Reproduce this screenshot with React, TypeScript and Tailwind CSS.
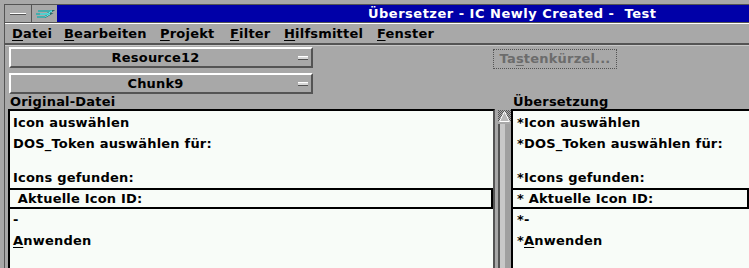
import React from 'react';

const F = "font-['DejaVu_Sans','Liberation_Sans',sans-serif] font-bold tracking-[0.2px]";

const Mn = ({ k, rest }: { k: string; rest: string }) => (
  <>
    <span className="underline decoration-1 underline-offset-[2px]">{k}</span>
    {rest}
  </>
);

const menus = [
  { k: 'D', rest: 'atei', w: 'w-[52px]' },
  { k: 'B', rest: 'earbeiten', w: 'w-[96px]' },
  { k: 'P', rest: 'rojekt', w: 'w-[70px]' },
  { k: 'F', rest: 'ilter', w: 'w-[54px]' },
  { k: 'H', rest: 'ilfsmittel', w: 'w-[93px]' },
  { k: 'F', rest: 'enster', w: 'w-[80px]' },
];

const Dropdown = ({ label }: { label: string }) => (
  <div className="w-[304px] h-[21px] bg-[#a8a8a8] border-t-2 border-l-2 border-t-white border-l-white border-b-2 border-r-2 border-b-[#545454] border-r-[#545454] flex items-center">
    <div className="flex-1 text-center text-[13px] text-black pl-[2px]">{label}</div>
    <div className="w-[10px] h-[4px] bg-[#d8d8d8] border-t border-t-white border-b border-b-[#545454] mr-[3px] mt-[1px]" />
  </div>
);

type Row = { t: React.ReactNode; box?: boolean; h?: string };

const leftRows: Row[] = [
  { t: 'Icon auswählen' },
  { t: 'DOS_Token auswählen für:' },
  { t: '', h: 'h-[13px]' },
  { t: 'Icons gefunden:' },
  { t: '\u00a0Aktuelle Icon ID:', box: true },
  { t: '-' },
  { t: <Mn k="A" rest="nwenden" /> },
];

const rightRows: Row[] = [
  { t: '*Icon auswählen' },
  { t: '*DOS_Token auswählen für:' },
  { t: '', h: 'h-[13px]' },
  { t: '*Icons gefunden:' },
  { t: '*\u00a0Aktuelle Icon ID:', box: true },
  { t: '*-' },
  { t: <>*<Mn k="A" rest="nwenden" /></> },
];

const Rows = ({ rows, pad }: { rows: Row[]; pad: string }) => (
  <>
    {rows.map((r, i) =>
      r.box ? (
        <div key={i} className={`h-[21px] border-2 border-black -ml-[2px] flex items-center ${pad}`}>
          {r.t}
        </div>
      ) : (
        <div key={i} className={`${r.h ?? 'h-[21px]'} flex items-center ${pad}`}>
          {r.t}
        </div>
      )
    )}
  </>
);

const UpArrow = () => (
  <svg width="13" height="14" viewBox="0 0 13 14">
    <defs>
      <pattern id="dith" width="2" height="2" patternUnits="userSpaceOnUse">
        <rect width="2" height="2" fill="#a8a8a8" />
        <rect width="1" height="1" fill="#545454" />
        <rect x="1" y="1" width="1" height="1" fill="#545454" />
      </pattern>
    </defs>
    <rect width="13" height="14" fill="url(#dith)" />
    <path d="M6.5 1.5 L11.5 11.5 L1.5 11.5 Z" fill="#b8b8b8" stroke="#ffffff" strokeWidth="1" />
    <rect x="0" y="12" width="13" height="2" fill="#a8a8a8" />
  </svg>
);

export default function App() {
  return (
    <div className={`w-[749px] h-[268px] overflow-hidden bg-[#a8a8a8] pl-[4px] pt-[4px] ${F}`}>
      <div className="h-full border-l border-t border-[#545454] flex flex-col">
        {/* title bar */}
        <div className="h-[18px] flex border-b border-[#545454] shrink-0">
          <div className="w-[26px] flex items-center justify-center">
            <div className="w-[16px] h-[2px] bg-white border-b border-[#545454]" />
          </div>
          <div className="w-px bg-[#545454]" />
          <div className="w-[25px] flex items-center justify-center">
            <svg width="20" height="10" viewBox="0 0 20 10">
              <path d="M3 2 H17 L12 5 H1 M5 5 H15 L10 8 H2" fill="none" stroke="#2a6a6a" strokeWidth="2" />
              <path d="M3 2 H17 L12 5 H1 M5 5 H15 L10 8 H2" fill="none" stroke="#5ff0f0" strokeWidth="1" />
            </svg>
          </div>
          <div className="flex-1 bg-[#0000a8] text-white text-[13px] tracking-[0.5px] flex items-center pl-[311px] whitespace-pre">
            Übersetzer - IC Newly Created -  Test
          </div>
        </div>
        {/* menu bar */}
        <div className="h-[20px] flex items-center pl-[7px] text-[13px] text-black border-t border-white shrink-0">
          {menus.map((m, i) => (
            <span key={i} className={m.w}>
              <Mn k={m.k} rest={m.rest} />
            </span>
          ))}
        </div>
        <div className="h-[2px] bg-[#545454] shrink-0" />
        <div className="h-px bg-[#c8c8c8] shrink-0" />
        {/* controls */}
        <div className="flex pl-[4px] pt-[1px] shrink-0">
          <div className="flex flex-col gap-[5px]">
            <Dropdown label="Resource12" />
            <Dropdown label="Chunk9" />
          </div>
          <div className="ml-[180px] mt-[2px] w-[124px] h-[20px] border border-dotted border-[#545454] flex items-center justify-center text-[13px] text-[#6c6c6c]">
            Ta<span className="underline decoration-1 underline-offset-[2px]">s</span>tenkürzel...
          </div>
        </div>
        {/* labels */}
        <div className="h-[15px] flex items-end text-[13px] text-black shrink-0">
          <div className="w-[508px] pl-[5px] leading-[14px]">Original-Datei</div>
          <div className="leading-[14px]">Übersetzung</div>
        </div>
        {/* panes */}
        <div className="flex-1 flex pl-[3px] min-h-0">
          <div className="w-[487px] bg-[#f8fcf8] border-t-2 border-l-2 border-black border-r-2 border-r-[#545454] flex flex-col pt-[1px] text-[13px] text-black">
            <Rows rows={leftRows} pad="pl-[3px]" />
          </div>
          <div className="w-[16px] pl-[3px] flex flex-col pt-[1px]">
            <UpArrow />
            <div className="flex-1 flex">
              <div className="w-[2px] bg-[#545454]" />
              <div className="w-[5px] bg-[#c8c8c8]" />
              <div className="w-[6px] bg-[#a0a0a0]" />
            </div>
          </div>
          <div className="flex-1 bg-[#f8fcf8] border-t-2 border-l-2 border-black flex flex-col pt-[1px] text-[13px] text-black">
            <Rows rows={rightRows} pad="pl-[4px]" />
          </div>
        </div>
      </div>
    </div>
  );
}
